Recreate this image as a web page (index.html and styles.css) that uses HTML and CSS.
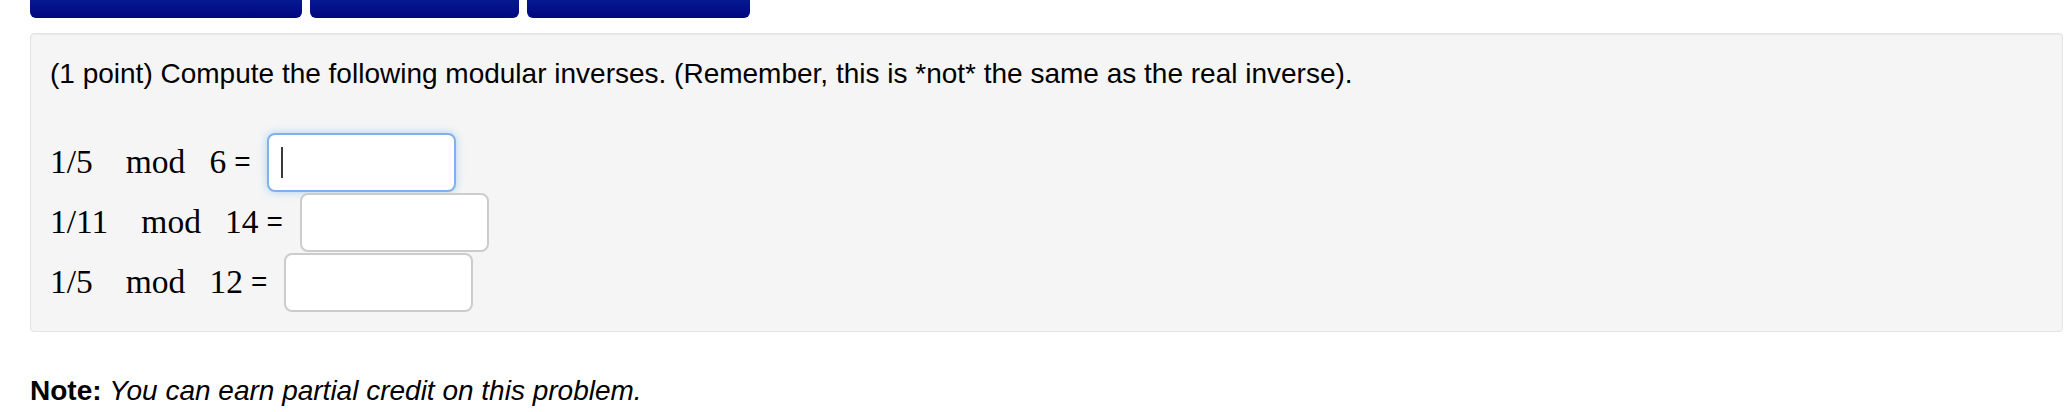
FILE: index.html
```html
<!DOCTYPE html>
<html lang="en">
<head>
<meta charset="utf-8">
<title>Modular inverses</title>
<link rel="stylesheet" href="styles.css">
</head>
<body>
<div class="toolbar">
  <span class="nav-btn btn-a"></span>
  <span class="nav-btn btn-b"></span>
  <span class="nav-btn btn-c"></span>
</div>
<div class="well">
  <p class="title">(1 point) Compute the following modular inverses. (Remember, this is *not* the same as the real inverse).</p>
  <div class="row">
    <span class="math frac">1/5</span><span class="math mod">mod</span><span class="math">6</span><span class="eq">=</span><span class="answer focused"><span class="caret"></span></span>
  </div>
  <div class="row">
    <span class="math frac">1/11</span><span class="math mod">mod</span><span class="math">14</span><span class="eq">=</span><span class="answer"></span>
  </div>
  <div class="row">
    <span class="math frac">1/5</span><span class="math mod">mod</span><span class="math">12</span><span class="eq">=</span><span class="answer"></span>
  </div>
</div>
<p class="note"><b>Note:</b> <i>You can earn partial credit on this problem.</i></p>
</body>
</html>
```
FILE: styles.css
```css
html, body {
  margin: 0;
  padding: 0;
  background: #ffffff;
}
body {
  font-family: "Liberation Sans", Arial, sans-serif;
  font-size: 28px;
  color: #000000;
  overflow: hidden;
}
.toolbar {
  display: flex;
  gap: 8px;
  padding-left: 30px;
}
.nav-btn {
  display: block;
  height: 18px;
  border-radius: 0 0 6px 6px;
  background: linear-gradient(to bottom, #061891, #00087d);
}
.btn-a { width: 272px; }
.btn-b { width: 209px; }
.btn-c { width: 223px; }
.well {
  margin: 15px 1px 0 30px;
  padding: 19px;
  border: 1px solid #e3e3e3;
  border-radius: 4px;
  background: #f5f5f5;
  box-shadow: inset 0 1px 1px rgba(0, 0, 0, 0.05);
}
.title {
  margin: 1px 0 38px;
  line-height: 40px;
}
.row {
  display: flex;
  align-items: center;
  height: 60px;
}
.math {
  font-family: "Liberation Serif", "Times New Roman", serif;
  font-size: 33.5px;
  line-height: 40px;
}
.frac {
  margin-right: 33px;
}
.mod {
  margin-right: 24px;
}
.eq {
  margin-left: 8px;
  margin-right: 17px;
  line-height: 40px;
}
.answer {
  display: flex;
  align-items: center;
  box-sizing: border-box;
  width: 189px;
  height: 59px;
  padding-left: 12px;
  background: #ffffff;
  border: 2px solid #cccccc;
  border-radius: 8px;
}
.answer.focused {
  border-color: #7fb2ea;
  box-shadow: 0 0 8px rgba(82, 168, 236, 0.45);
}
.caret {
  display: block;
  width: 2px;
  height: 31px;
  background: #3a3a3a;
}
.note {
  margin: 39px 0 0 30px;
  line-height: 40px;
}
```
